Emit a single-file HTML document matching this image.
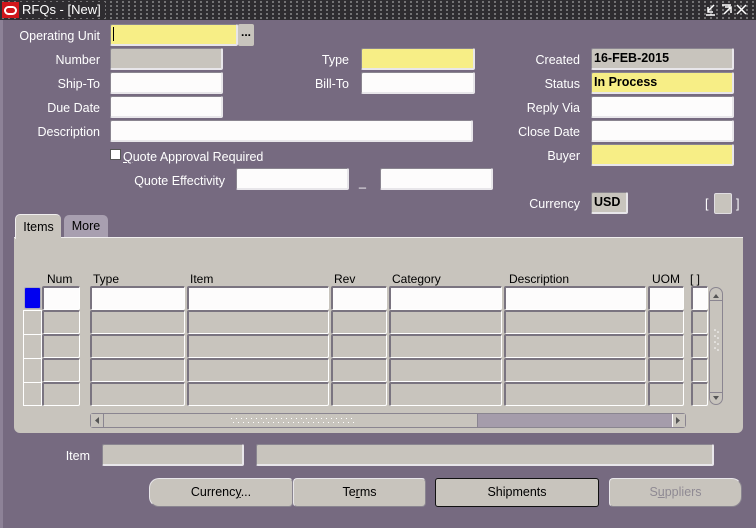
<!DOCTYPE html>
<html><head><meta charset="utf-8"><style>
*{box-sizing:border-box;margin:0;padding:0}
body{width:756px;height:528px;overflow:hidden;background:#766a80;font-family:"Liberation Sans",sans-serif;font-size:12px;color:#fff;position:relative}
.a{position:absolute}
.tb{left:0;top:0;width:756px;height:20px;background:#2e2c30;background-image:radial-gradient(circle,#8a8a8a 0.8px,transparent 1px);background-size:6px 4px}
.tt{left:20px;top:2px;height:16px;padding:0 4px 0 2px;background:#2e2c30;color:#fff;font-size:13px;line-height:16px}
.logo{left:2px;top:2px;width:17px;height:16px;background:#d0161b}
.logo:after{content:"";position:absolute;left:2px;top:4px;width:9px;height:5px;border:2px solid #fff;border-radius:5px}
.lb{text-align:right;line-height:21px;font-size:12.5px;padding-top:2px}
.f{border-top:1px solid #8a8590;border-left:1px solid #8a8590;border-bottom:2px solid #e8e6ea;border-right:2px solid #e8e6ea;border-radius:2px;height:22px;color:#000;font-weight:bold;font-size:12.5px;line-height:18px;padding-left:2px}
.w{background:#fdfcfc}.g{background:#c8c4bd}.y{background:#f7ee86}
.panel{left:14px;top:237px;width:729px;height:196px;background:#c8c4bd;border-radius:0 0 6px 6px;border-top:1px solid #f0eeee}
.tab{height:24px;border-radius:5px 5px 0 0;color:#000;font-size:12.5px;line-height:24px;text-align:center}
.h{color:#000;font-size:12px;top:272px}
.c{border-top:2px solid #7a7480;border-left:2px solid #7a7480;border-bottom:1px solid #fff;border-right:1px solid #fff;height:24px;background:#c8c4bd;border-radius:2px}
.c.w{background:#fdfcfc}
.btn{top:478px;height:29px;background:#c8c4bd;border-radius:6px;color:#000;text-align:center;line-height:27px;font-size:12.5px;border:1px solid #e8e6ea;border-right-color:#8a8590;border-bottom-color:#8a8590}
</style></head><body>
<div class="a tb"></div>
<div class="a logo"></div>
<div class="a tt">RFQs - [New]</div>
<svg class="a" style="left:700px;top:2px" width="56" height="16" viewBox="0 0 56 16" fill="none" stroke="#fff" stroke-width="1.5">
<path d="M14 3 L8 9 M8 5 V10 H13 M6 13 H15"/><path d="M24 12 L30 6 M25 5 H31 V11 M22 3 H31"/><path d="M37 3 L46 12 M46 3 L37 12"/></svg>
<div class="a" style="left:0;top:20px;width:3px;height:508px;background:#8d8297"></div>

<div class="a lb" style="left:0;width:100px;top:24px">Operating Unit</div>
<div class="a f y" style="left:110px;top:24px;width:128px"><span style="display:inline-block;width:1px;height:14px;background:#000;margin-top:2px"></span></div>
<div class="a" style="left:238px;top:24px;width:16px;height:22px;background:#c8c4bd;border-radius:2px;color:#000;font-weight:bold;text-align:center;line-height:16px">...</div>
<div class="a lb" style="left:0;width:100px;top:48px">Number</div><div class="a f g" style="left:110px;top:48px;width:113px"></div>
<div class="a lb" style="left:0;width:100px;top:72px">Ship-To</div><div class="a f w" style="left:110px;top:72px;width:113px"></div>
<div class="a lb" style="left:0;width:100px;top:96px">Due Date</div><div class="a f w" style="left:110px;top:96px;width:113px"></div>
<div class="a lb" style="left:0;width:100px;top:120px">Description</div><div class="a f w" style="left:110px;top:120px;width:363px"></div>
<div class="a" style="left:110px;top:149px;width:11px;height:11px;background:#fff;border:1px solid #555"></div>
<div class="a lb" style="left:123px;top:145px"><u>Q</u>uote Approval Required</div>
<div class="a lb" style="left:100px;width:125px;top:169px">Quote Effectivity</div>
<div class="a f w" style="left:236px;top:168px;width:113px"></div>
<div class="a lb" style="left:359px;top:170px">_</div>
<div class="a f w" style="left:380px;top:168px;width:113px"></div>

<div class="a lb" style="left:250px;width:99px;top:48px">Type</div><div class="a f y" style="left:361px;top:48px;width:114px"></div>
<div class="a lb" style="left:250px;width:99px;top:72px">Bill-To</div><div class="a f w" style="left:361px;top:72px;width:114px"></div>

<div class="a lb" style="left:480px;width:100px;top:48px">Created</div><div class="a f g" style="left:591px;top:48px;width:143px">16-FEB-2015</div>
<div class="a lb" style="left:480px;width:100px;top:72px">Status</div><div class="a f y" style="left:591px;top:72px;width:143px">In Process</div>
<div class="a lb" style="left:480px;width:100px;top:96px">Reply Via</div><div class="a f w" style="left:591px;top:96px;width:143px"></div>
<div class="a lb" style="left:480px;width:100px;top:120px">Close Date</div><div class="a f w" style="left:591px;top:120px;width:143px"></div>
<div class="a lb" style="left:480px;width:100px;top:144px">Buyer</div><div class="a f y" style="left:591px;top:144px;width:143px"></div>
<div class="a lb" style="left:480px;width:100px;top:192px">Currency</div><div class="a f g" style="left:591px;top:192px;width:37px">USD</div>
<div class="a lb" style="left:705px;top:192px">[</div>
<div class="a" style="left:714px;top:193px;width:18px;height:21px;background:#c8c4bd;border-radius:2px;border:1px solid #e0dde2"></div>
<div class="a lb" style="left:736px;top:192px">]</div>

<div class="a panel"></div>
<div class="a tab" style="left:15px;top:214px;width:46px;height:25px;background:#c8c4bd;border-top:1px solid #f0eeee;border-left:1px solid #f0eeee">Items</div>
<div class="a tab" style="left:64px;top:215px;width:44px;height:22px;line-height:22px;background:#a89fb0">More</div>

<div class="a h" style="left:47px">Num</div><div class="a h" style="left:93px">Type</div><div class="a h" style="left:190px">Item</div><div class="a h" style="left:334px">Rev</div><div class="a h" style="left:392px">Category</div><div class="a h" style="left:509px">Description</div><div class="a h" style="left:652px">UOM</div><div class="a h" style="left:690px">[ ]</div>

<div class="a" style="left:24px;top:287px;width:17px;height:22px;background:#0000f0;border:1px solid #aab;border-radius:2px"></div>
<div class="a c w" style="left:42px;top:286px;width:38px"></div><div class="a c w" style="left:90px;top:286px;width:95px"></div><div class="a c w" style="left:187px;top:286px;width:142px"></div><div class="a c w" style="left:331px;top:286px;width:56px"></div><div class="a c w" style="left:389px;top:286px;width:113px"></div><div class="a c w" style="left:504px;top:286px;width:142px"></div><div class="a c w" style="left:648px;top:286px;width:36px"></div><div class="a c w" style="left:691px;top:286px;width:17px"></div>
<div class="a" style="left:23px;top:310px;width:19px;height:96px;border:1px solid #fff;background:repeating-linear-gradient(#c8c4bd 0 23px,#fff 23px 24px)"></div>
<div class="a c" style="left:42px;top:310px;width:38px"></div><div class="a c" style="left:90px;top:310px;width:95px"></div><div class="a c" style="left:187px;top:310px;width:142px"></div><div class="a c" style="left:331px;top:310px;width:56px"></div><div class="a c" style="left:389px;top:310px;width:113px"></div><div class="a c" style="left:504px;top:310px;width:142px"></div><div class="a c" style="left:648px;top:310px;width:36px"></div><div class="a c" style="left:691px;top:310px;width:17px"></div>
<div class="a c" style="left:42px;top:334px;width:38px"></div><div class="a c" style="left:90px;top:334px;width:95px"></div><div class="a c" style="left:187px;top:334px;width:142px"></div><div class="a c" style="left:331px;top:334px;width:56px"></div><div class="a c" style="left:389px;top:334px;width:113px"></div><div class="a c" style="left:504px;top:334px;width:142px"></div><div class="a c" style="left:648px;top:334px;width:36px"></div><div class="a c" style="left:691px;top:334px;width:17px"></div>
<div class="a c" style="left:42px;top:358px;width:38px"></div><div class="a c" style="left:90px;top:358px;width:95px"></div><div class="a c" style="left:187px;top:358px;width:142px"></div><div class="a c" style="left:331px;top:358px;width:56px"></div><div class="a c" style="left:389px;top:358px;width:113px"></div><div class="a c" style="left:504px;top:358px;width:142px"></div><div class="a c" style="left:648px;top:358px;width:36px"></div><div class="a c" style="left:691px;top:358px;width:17px"></div>
<div class="a c" style="left:42px;top:382px;width:38px"></div><div class="a c" style="left:90px;top:382px;width:95px"></div><div class="a c" style="left:187px;top:382px;width:142px"></div><div class="a c" style="left:331px;top:382px;width:56px"></div><div class="a c" style="left:389px;top:382px;width:113px"></div><div class="a c" style="left:504px;top:382px;width:142px"></div><div class="a c" style="left:648px;top:382px;width:36px"></div><div class="a c" style="left:691px;top:382px;width:17px"></div>

<div class="a" style="left:709px;top:287px;width:14px;height:118px;border:1px solid #8a8590;border-radius:7px;background:#c8c4bd"></div>
<div class="a" style="left:710px;top:300px;width:12px;height:1px;background:#8a8590"></div>
<div class="a" style="left:710px;top:392px;width:12px;height:1px;background:#8a8590"></div>
<svg class="a" style="left:710px;top:290px" width="12" height="114"><path d="M3 8 L6 4 L9 8Z M3 106 L6 110 L9 106Z" fill="#555"/><g fill="#fff"><circle cx="5" cy="40" r=".8"/><circle cx="8" cy="42" r=".8"/><circle cx="5" cy="46" r=".8"/><circle cx="8" cy="48" r=".8"/><circle cx="5" cy="52" r=".8"/><circle cx="8" cy="54" r=".8"/><circle cx="5" cy="58" r=".8"/><circle cx="8" cy="60" r=".8"/></g></svg>
<div class="a" style="left:90px;top:413px;width:596px;height:15px;background:#a59cab;border:1px solid #8a8590;border-radius:3px"></div>
<div class="a" style="left:91px;top:414px;width:387px;height:13px;background:#c8c4bd;border-right:1px solid #8a8590"></div>
<div class="a" style="left:91px;top:414px;width:13px;height:13px;background:#c8c4bd;border-right:1px solid #8a8590"></div>
<div class="a" style="left:672px;top:414px;width:13px;height:13px;background:#c8c4bd;border-left:1px solid #fff"></div>
<svg class="a" style="left:91px;top:414px" width="595" height="13"><path d="M8 3 L4 6.5 L8 10Z M585 3 L589 6.5 L585 10Z" fill="#555"/><g stroke="#fff" stroke-width="1" stroke-dasharray="1 4"><line x1="140" y1="4.5" x2="262" y2="4.5"/><line x1="142" y1="8.5" x2="264" y2="8.5"/></g></svg>

<div class="a lb" style="left:40px;width:50px;top:444px">Item</div>
<div class="a f g" style="left:102px;top:444px;width:142px"></div>
<div class="a f g" style="left:256px;top:444px;width:458px"></div>

<div class="a btn" style="left:149px;width:144px;border-radius:10px 4px 4px 10px">Currenc<u>y</u>...</div>
<div class="a btn" style="left:293px;width:133px;border-radius:4px">Te<u>r</u>ms</div>
<div class="a btn" style="left:435px;width:164px;border:1px solid #111;border-radius:3px">Shipments</div>
<div class="a btn" style="left:609px;width:133px;color:#8f8a93;border-radius:4px 10px 10px 4px">S<u>u</u>ppliers</div>
</body></html>
